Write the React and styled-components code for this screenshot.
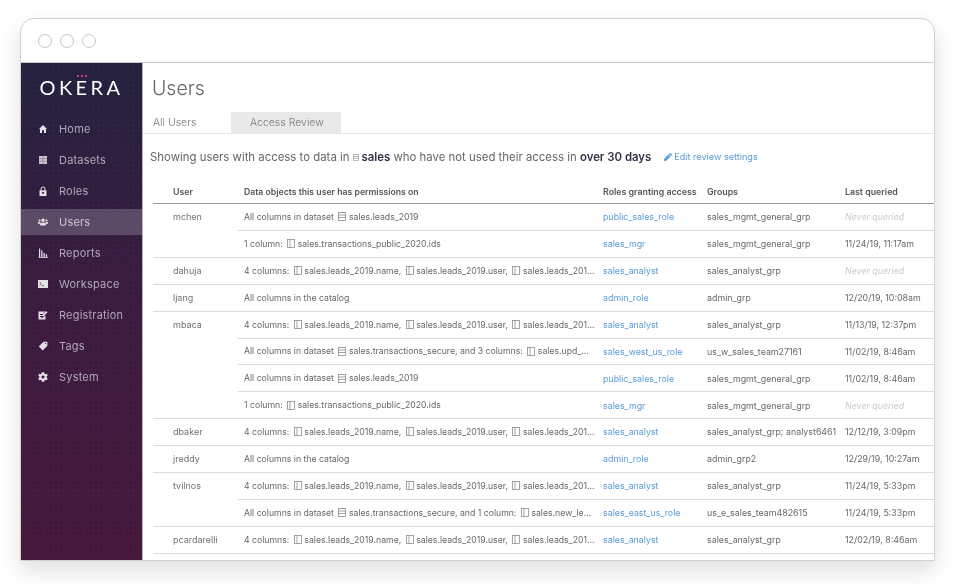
import React from 'react'
import styled, { createGlobalStyle } from 'styled-components'
import { FaUsers, FaCog, FaPen } from 'react-icons/fa'

const Global = createGlobalStyle`
  html, body { margin: 0; padding: 0; background: #fff; }
  body { width: 960px; height: 588px; overflow: hidden; font-family: "Inter", "Open Sans", sans-serif; }
`

const Page = styled.div`
  width: 960px;
  height: 588px;
  padding: 18px 25px 0 20px;
  box-sizing: border-box;
  overflow: hidden;
  filter: blur(0.5px);
`
const Frame = styled.div`
  height: 541px;
  border: 1px solid #d0d0d0;
  border-radius: 14px 14px 0 0;
  background: #fff;
  box-shadow: 0 10px 22px rgba(0, 0, 0, 0.13);
  display: flex;
  flex-direction: column;
  overflow: hidden;
`
const TitleBar = styled.div`
  height: 43px;
  border-bottom: 1px solid #c9c9c9;
  display: flex;
  align-items: center;
  gap: 8px;
  padding-left: 17px;
  flex-shrink: 0;
`
const Dot = styled.span`
  width: 12px;
  height: 12px;
  border: 1.5px solid #c6c6c6;
  border-radius: 50%;
`
const Body = styled.div`
  flex: 1;
  display: flex;
  min-height: 0;
`
const Sidebar = styled.nav`
  width: 121px;
  flex-shrink: 0;
  background-image:
    radial-gradient(rgba(255, 255, 255, 0.06) 0.6px, transparent 0.8px),
    linear-gradient(180deg, #24213f 0%, #3a1c40 45%, #46183b 100%);
  background-size: 5px 5px, 100% 100%;
  border-right: 1px solid #b9b4bb;
`
const Logo = styled.div`
  color: #fff;
  font-family: "Lato", sans-serif;
  font-size: 20px;
  font-weight: 400;
  letter-spacing: 3.4px;
  text-align: center;
  padding: 12px 0 16px;
  line-height: 25px;
  position: relative;
`
const LogoMark = styled.span`
  position: absolute;
  left: 56px;
  top: 12px;
  width: 10px;
  border-top: 2px dotted #c2436e;
`
const NavItem = styled.div`
  height: 26px;
  margin-bottom: 5px;
  display: flex;
  align-items: center;
  gap: 11px;
  padding-left: 17px;
  font-size: 11px;
  letter-spacing: 0.2px;
  background: ${(props) => (props.$active ? 'rgba(255, 255, 255, 0.2)' : 'transparent')};
  color: ${(props) => (props.$active ? '#cfc7d1' : '#b0a8b8')};
  svg { width: 10px; height: 10px; color: #e4e0e6; flex-shrink: 0; }
`
const Main = styled.main`
  flex: 1;
  min-width: 0;
  display: flex;
  flex-direction: column;
`
const Title = styled.h1`
  margin: 0;
  padding: 10px 0 0 9px;
  font-size: 19.5px;
  line-height: 30px;
  font-weight: 300;
  color: #66666a;
`
const Tabs = styled.div`
  margin-top: 9px;
  height: 21px;
  display: flex;
  border-bottom: 1px solid #e6e6e6;
`
const Tab = styled.div`
  width: ${(props) => (props.$active ? '110px' : '88px')};
  display: flex;
  align-items: center;
  padding-left: ${(props) => (props.$active ? '19px' : '10px')};
  box-sizing: border-box;
  font-size: 10.5px;
  font-weight: 300;
  color: #777;
  background: ${(props) => (props.$active ? '#e9e9e9' : 'transparent')};
`
const Summary = styled.p`
  margin: 0;
  padding: 14px 0 0 7px;
  height: 32px;
  box-sizing: border-box;
  font-size: 11.4px;
  line-height: 16px;
  color: #666;
  white-space: nowrap;
  display: flex;
  align-items: center;
  b { font-weight: 600; color: #35324a; }
  svg { margin: 0 2px 0 4px; }
`
const EditLink = styled.a`
  margin-left: 13px;
  font-size: 9.1px;
  color: #5b9bd8;
  display: inline-flex;
  align-items: center;
  gap: 2px;
  svg { width: 8px; height: 8px; margin: 0; }
`
const Table = styled.div`
  margin: 14px 0 0 10px;
  flex: 1;
  min-height: 0;
  overflow: hidden;
`
const Grid = styled.div`
  display: grid;
  grid-template-columns: 365px 104px 138px 1fr;
`
const HeadRow = styled.div`
  display: flex;
  height: 23px;
  align-items: center;
  border-bottom: 1.5px solid #9a9a9a;
  font-size: 8.8px;
  font-weight: 600;
  color: #55555c;
`
const HeadCells = styled(Grid)`
  flex: 1;
`
const UserCol = styled.div`
  width: 85px;
  padding-left: 20px;
  box-sizing: border-box;
  flex-shrink: 0;
`
const Group = styled.div`
  display: flex;
  border-bottom: 1.5px solid #dcdcdc;
  font-size: 8.85px;
  color: #68686b;
`
const UserName = styled(UserCol)`
  line-height: 26px;
  font-size: 9px;
  color: #707073;
`
const Rows = styled.div`
  flex: 1;
  min-width: 0;
`
const Row = styled(Grid)`
  height: 25.85px;
  align-items: center;
  white-space: nowrap;
  border-top: ${(props) => (props.$first ? 'none' : '1.5px solid #dcdcdc')};
`
const Objects = styled.div`
  overflow: hidden;
  display: flex;
  align-items: center;
  padding-left: 6px;
  font-size: 8.7px;
  svg { flex-shrink: 0; margin: 0 2.5px 0 4.5px; }
`
const RoleLink = styled.a`
  color: #5b9bd8;
`
const Queried = styled.div`
  color: ${(props) => (props.$never ? '#c9c9c9' : '#68686b')};
  font-style: ${(props) => (props.$never ? 'italic' : 'normal')};
`

const TableGlyph = ({ size = 8 }) => (
  <svg width={size} height={size + 1} viewBox="0 0 8 9" fill="none" stroke="#8d8d90" strokeWidth="0.8">
    <rect x="0.5" y="0.5" width="7" height="8" />
    <path d="M0.5 3h7M0.5 5.5h7" />
  </svg>
)
const ColumnGlyph = () => (
  <svg width="8" height="9" viewBox="0 0 8 9" fill="none" stroke="#8d8d90" strokeWidth="0.8">
    <rect x="0.5" y="0.5" width="7" height="8" />
    <path d="M3 0.5v8" />
  </svg>
)
const HomeIcon = () => (
  <svg viewBox="0 0 10 10" fill="currentColor">
    <path d="M5 1 L9 5 H8 V9 H6 V6.2 H4 V9 H2 V5 H1 Z" />
  </svg>
)
const DatasetIcon = () => (
  <svg viewBox="0 0 10 10" fill="currentColor">
    <path d="M1 1h8v8H1z" opacity="0.85" />
    <path d="M1 3.6h8M1 6.3h8M5 1v8" stroke="#3a2a4c" strokeWidth="0.3" />
  </svg>
)
const RoleIcon = () => (
  <svg viewBox="0 0 10 10" fill="currentColor">
    <path d="M3 4.5V3a2 2 0 0 1 4 0v1.5" fill="none" stroke="currentColor" strokeWidth="1" />
    <path fillRule="evenodd" d="M1.5 4.3h7V10h-7z M5 5.8a1 1 0 1 0 0.01 0z" />
  </svg>
)
const ReportIcon = () => (
  <svg viewBox="0 0 10 10" fill="currentColor">
    <path d="M0.5 9.2h9.5v0.8H0.5z" />
    <path d="M1 0.5h1.2v8.7H1zM3.2 2.5h1.3v6.7H3.2zM5.5 5h1.3v4.2H5.5zM7.8 6.3h1.3v2.9H7.8z" />
  </svg>
)
const WorkspaceIcon = () => (
  <svg viewBox="0 0 10 10">
    <path d="M0 1h10v8H0z" fill="currentColor" />
    <path d="M1.6 3.2l1.6 1.5-1.6 1.5M3.8 6.6h2" fill="none" stroke="#3d1d40" strokeWidth="0.7" />
  </svg>
)
const RegistrationIcon = () => (
  <svg viewBox="0 0 10 10" fill="currentColor">
    <path d="M0.5 1.5h6.5L5 4H2v1h2.4l-0.6 1H2v1h1.4l-0.2 1.2 1.9-0.6L7.5 5.5V9.5h-7z" />
    <path d="M8 1l1.5 1.2-4.2 4.6-1.4-1.1z" />
  </svg>
)
const TagIcon = () => (
  <svg viewBox="0 0 10 10" fill="currentColor">
    <path fillRule="evenodd" d="M5.5 0.8H9.4V4.8L4.7 9.5L0.8 5.5Z M7.6 2a0.6 0.6 0 1 0 0.01 0z" />
  </svg>
)

const nav = [
  ['Home', <HomeIcon />],
  ['Datasets', <DatasetIcon />],
  ['Roles', <RoleIcon />],
  ['Users', <FaUsers />, true],
  ['Reports', <ReportIcon />],
  ['Workspace', <WorkspaceIcon />],
  ['Registration', <RegistrationIcon />],
  ['Tags', <TagIcon />],
  ['System', <FaCog />],
]

const four = (
  <>
    4 columns: <ColumnGlyph /> sales.leads_2019.name, <ColumnGlyph /> sales.leads_2019.user, <ColumnGlyph /> sales.leads_201...
  </>
)

const groups = [
  { user: 'mchen', rows: [
    [<>All columns in dataset <TableGlyph /> sales.leads_2019</>, 'public_sales_role', 'sales_mgmt_general_grp', null],
    [<>1 column: <ColumnGlyph /> sales.transactions_public_2020.ids</>, 'sales_mgr', 'sales_mgmt_general_grp', '11/24/19, 11:17am'],
  ] },
  { user: 'dahuja', rows: [[four, 'sales_analyst', 'sales_analyst_grp', null]] },
  { user: 'ljang', rows: [['All columns in the catalog', 'admin_role', 'admin_grp', '12/20/19, 10:08am']] },
  { user: 'mbaca', rows: [
    [four, 'sales_analyst', 'sales_analyst_grp', '11/13/19, 12:37pm'],
    [<>All columns in dataset <TableGlyph /> sales.transactions_secure, and 3 columns: <ColumnGlyph /> sales.upd_...</>, 'sales_west_us_role', 'us_w_sales_team27161', '11/02/19, 8:46am'],
    [<>All columns in dataset <TableGlyph /> sales.leads_2019</>, 'public_sales_role', 'sales_mgmt_general_grp', '11/02/19, 8:46am'],
    [<>1 column: <ColumnGlyph /> sales.transactions_public_2020.ids</>, 'sales_mgr', 'sales_mgmt_general_grp', null],
  ] },
  { user: 'dbaker', rows: [[four, 'sales_analyst', 'sales_analyst_grp; analyst6461', '12/12/19, 3:09pm']] },
  { user: 'jreddy', rows: [['All columns in the catalog', 'admin_role', 'admin_grp2', '12/29/19, 10:27am']] },
  { user: 'tvilnos', rows: [
    [four, 'sales_analyst', 'sales_analyst_grp', '11/24/19, 5:33pm'],
    [<>All columns in dataset <TableGlyph /> sales.transactions_secure, and 1 column: <ColumnGlyph /> sales.new_le...</>, 'sales_east_us_role', 'us_e_sales_team482615', '11/24/19, 5:33pm'],
  ] },
  { user: 'pcardarelli', rows: [[four, 'sales_analyst', 'sales_analyst_grp', '12/02/19, 8:46am']] },
]

const App = () => {
  return (
    <Page>
      <Global />
      <Frame>
        <TitleBar>
          <Dot />
          <Dot />
          <Dot />
        </TitleBar>
        <Body>
          <Sidebar>
            <Logo>
              <LogoMark />
              OKERA
            </Logo>
            {nav.map(([label, icon, active]) => (
              <NavItem key={label} $active={active}>
                {icon}
                {label}
              </NavItem>
            ))}
          </Sidebar>
          <Main>
            <Title>Users</Title>
            <Tabs>
              <Tab>All Users</Tab>
              <Tab $active>Access Review</Tab>
            </Tabs>
            <Summary>
              Showing users with access to data in <TableGlyph size={6} />
              <b>sales</b>&nbsp;who have not used their access in&nbsp;<b>over 30 days</b>
              <EditLink>
                <FaPen /> Edit review settings
              </EditLink>
            </Summary>
            <Table>
              <HeadRow>
                <UserCol>User</UserCol>
                <HeadCells>
                  <Objects>Data objects this user has permissions on</Objects>
                  <div>Roles granting access</div>
                  <div>Groups</div>
                  <div>Last queried</div>
                </HeadCells>
              </HeadRow>
              {groups.map((g) => (
                <Group key={g.user}>
                  <UserName>{g.user}</UserName>
                  <Rows>
                    {g.rows.map(([objects, role, group, last], i) => (
                      <Row key={i} $first={i === 0}>
                        <Objects>{objects}</Objects>
                        <RoleLink>{role}</RoleLink>
                        <div>{group}</div>
                        <Queried $never={!last}>{last || 'Never queried'}</Queried>
                      </Row>
                    ))}
                  </Rows>
                </Group>
              ))}
            </Table>
          </Main>
        </Body>
      </Frame>
    </Page>
  )
}

export default App
